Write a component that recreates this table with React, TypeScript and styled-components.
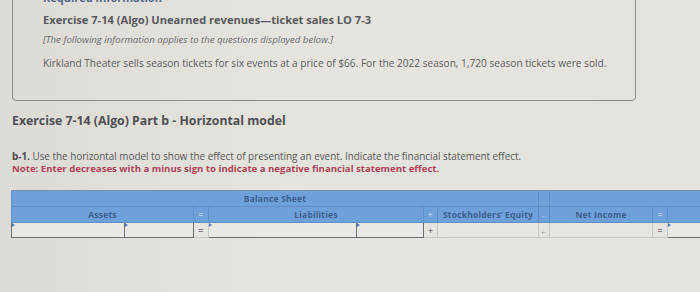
import styled, { createGlobalStyle } from 'styled-components';
import { FC } from 'react';

const GlobalStyle = createGlobalStyle`
  html, body {
    margin: 0;
    padding: 0;
    background: #e3e1dc;
    overflow: hidden;
  }
  body {
    font-family: 'Open Sans', 'Liberation Sans', sans-serif;
    color: #55565a;
  }
`;

const Page = styled.div`
  width: 700px;
  height: 292px;
  overflow: hidden;
  background: linear-gradient(90deg, #dddbd6 0%, #e6e4df 40%, #e5e3de 100%);
`;

const InfoPanel = styled.section`
  margin: -12px 0 0 12px;
  width: 624px;
  height: 113px;
  border: 1px solid #8d8c88;
  border-radius: 0 0 4px 4px;
  padding: 0 0 0 30px;
  box-sizing: border-box;
`;

const Tab = styled.div`
  font-size: 11px;
  font-weight: 700;
  color: #56698c;
  line-height: 14px;
  height: 14px;
  margin-top: 2px;
`;

const InfoTitle = styled.h2`
  margin: 8px 0 0;
  font-size: 11.1px;
  font-weight: 700;
  line-height: 14px;
  color: #58595d;
`;

const InfoNote = styled.p`
  margin: 6px 0 0;
  font-size: 9.6px;
  font-style: italic;
  line-height: 13px;
  color: #6b6c70;
`;

const InfoText = styled.p`
  margin: 11px 0 0;
  font-size: 10.1px;
  line-height: 13px;
  color: #5d5e62;
`;

const PartHeading = styled.h1`
  margin: 12px 0 0 12px;
  font-size: 12.3px;
  font-weight: 700;
  line-height: 16px;
  color: #4f5054;
`;

const Instructions = styled.div`
  margin: 22px 0 0 12px;
  font-size: 9.9px;
  line-height: 11px;
  color: #56575b;

  b {
    color: #4b4c50;
  }
`;

const Warning = styled.div`
  margin-top: 1px;
  font-weight: 700;
  font-size: 9.6px;
  color: #b0435a;
`;

const ModelTable = styled.table`
  margin: 16px 0 0 11px;
  border-collapse: collapse;
  table-layout: fixed;
  width: 720px;
  font-size: 8.5px;
  letter-spacing: 0.2px;
  font-weight: 700;

  th {
    background: #6ea1d9;
    color: #3d5f8c;
    height: 15px;
    padding: 0;
    border: 1px solid #5e8fc6;
    text-align: center;
    font-weight: 700;
    white-space: nowrap;
  }
  th.topline {
    border-top: 1px solid #7c8ea6;
  }
  th.sym {
    color: #b9cde6;
    font-size: 8px;
  }
`;

const Cell = styled.td<{ $input?: boolean }>`
  height: 14px;
  padding: 0;
  position: relative;
  background: ${(p) => (p.$input ? '#ebe9e5' : '#e7e5e0')};
  border: ${(p) => (p.$input ? '1px solid #6f6f6f' : '1px solid #c9c8c4')};
  color: #7d7e82;
  text-align: center;
  font-size: 8.5px;
`;

const Marker = styled.span`
  position: absolute;
  left: 0;
  top: 0;
  width: 0;
  height: 0;
  border-top: 2px solid transparent;
  border-bottom: 2px solid transparent;
  border-left: 3px solid #4e7fbf;
`;

const widths = [113, 69, 15, 148, 67, 14, 101, 11, 103, 15, 64];

const InputCell: FC = () => (
  <Cell $input>
    <Marker />
  </Cell>
);

const App: FC = () => {
  return (
    <Page>
      <GlobalStyle />
      <InfoPanel>
        <Tab>Required information</Tab>
        <InfoTitle>Exercise 7-14 (Algo) Unearned revenues—ticket sales LO 7-3</InfoTitle>
        <InfoNote>[The following information applies to the questions displayed below.]</InfoNote>
        <InfoText>
          Kirkland Theater sells season tickets for six events at a price of $66. For the 2022
          season, 1,720 season tickets were sold.
        </InfoText>
      </InfoPanel>

      <PartHeading>Exercise 7-14 (Algo) Part b - Horizontal model</PartHeading>

      <Instructions>
        <div>
          <b>b-1.</b> Use the horizontal model to show the effect of presenting an event. Indicate
          the financial statement effect.
        </div>
        <Warning>
          Note: Enter decreases with a minus sign to indicate a negative financial statement
          effect.
        </Warning>
      </Instructions>

      <ModelTable>
        <colgroup>
          {widths.map((w, i) => (
            <col key={i} style={{ width: w }} />
          ))}
        </colgroup>
        <thead>
          <tr>
            <th className="topline" colSpan={7}>Balance Sheet</th>
            <th className="topline" />
            <th className="topline" colSpan={3} />
          </tr>
          <tr>
            <th colSpan={2}>Assets</th>
            <th className="sym">=</th>
            <th colSpan={2}>Liabilities</th>
            <th className="sym">+</th>
            <th>Stockholders’ Equity</th>
            <th className="sym">←</th>
            <th>Net Income</th>
            <th className="sym">=</th>
            <th />
          </tr>
        </thead>
        <tbody>
          <tr>
            <InputCell />
            <InputCell />
            <Cell>=</Cell>
            <InputCell />
            <InputCell />
            <Cell>+</Cell>
            <Cell />
            <Cell>←</Cell>
            <Cell />
            <Cell>=</Cell>
            <InputCell />
          </tr>
        </tbody>
      </ModelTable>
    </Page>
  );
};

export default App;
